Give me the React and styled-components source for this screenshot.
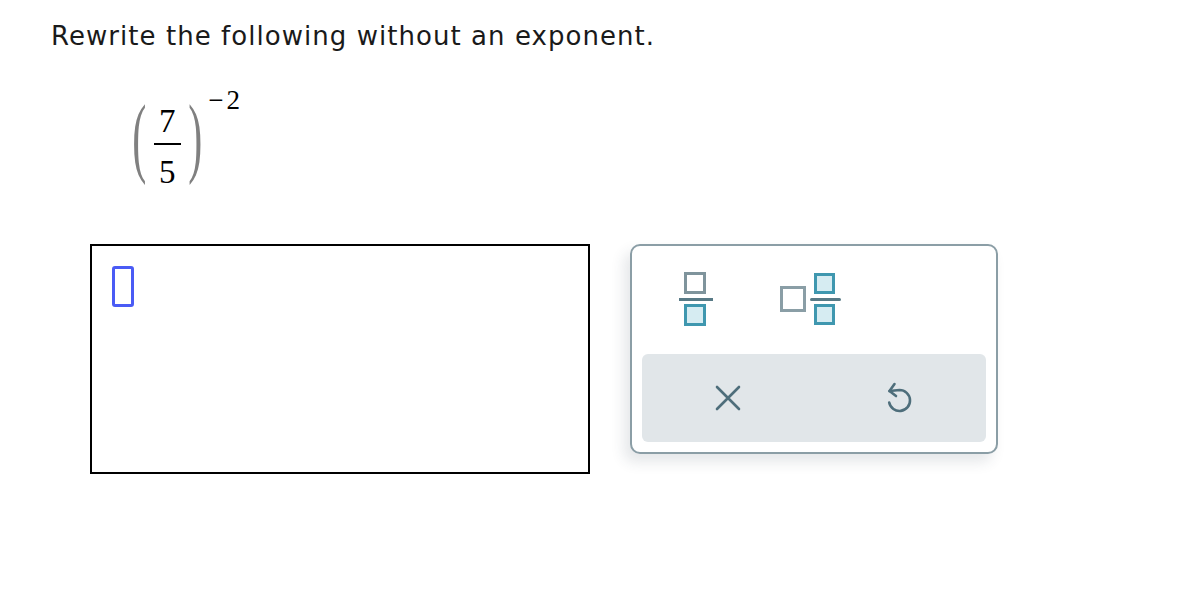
import styled, { createGlobalStyle } from "styled-components";

const GlobalStyle = createGlobalStyle`
  body {
    margin: 0;
    background: #ffffff;
    font-family: "DejaVu Sans", Verdana, sans-serif;
  }
`;

const Page = styled.div`
  width: 1182px;
  height: 590px;
  padding: 19px 0 0 51px;
  box-sizing: border-box;
`;

const Prompt = styled.div`
  font-size: 26px;
  letter-spacing: 1.05px;
  color: #1a1a1a;
  line-height: 34px;
`;

const MathBlock = styled.div`
  display: flex;
  align-items: flex-start;
  height: 110px;
  margin: 38px 0 0 78px;
  font-family: "Liberation Serif", "Times New Roman", serif;
  color: #000;
`;

const Paren = styled.span`
  display: inline-block;
  font-size: 62px;
  line-height: 62px;
  color: #808080;
  transform: scale(0.68, 1.42);
  transform-origin: center top;
  margin-top: 1px;
`;

const Fraction = styled.span`
  display: inline-flex;
  flex-direction: column;
  align-items: center;
  font-size: 33px;
  line-height: 33px;
  padding-top: 14px;
  margin: 0 4px;
`;

const Bar = styled.span`
  width: 27px;
  height: 1.5px;
  background: #000;
  margin: 5px 0 11px;
`;

const Exponent = styled.span`
  font-size: 27px;
  line-height: 27px;
  letter-spacing: 3px;
  margin: -4px 0 0 3px;
`;

const Row = styled.div`
  display: flex;
  align-items: flex-start;
  gap: 40px;
  margin: 43px 0 0 39px;
`;

const AnswerBox = styled.div`
  width: 500px;
  height: 230px;
  box-sizing: border-box;
  border: 2px solid #000;
  padding: 20px 0 0 20px;
`;

const Cursor = styled.div`
  width: 22px;
  height: 41px;
  box-sizing: border-box;
  border: 3px solid #4a5bf5;
  border-radius: 3px;
`;

const Keypad = styled.div`
  width: 368px;
  height: 210px;
  box-sizing: border-box;
  border: 2px solid #8b9ea6;
  border-radius: 10px;
  background: #fff;
  box-shadow: -6px 8px 14px rgba(40, 60, 70, 0.12);
  padding: 0 10px 10px;
  display: flex;
  flex-direction: column;
`;

const TopRow = styled.div`
  display: flex;
  height: 108px;
  margin-left: -4px;
`;

const KeyButton = styled.button`
  width: 115px;
  border: none;
  background: transparent;
  display: flex;
  align-items: center;
  justify-content: center;
  padding: 0;
  cursor: pointer;
`;

const ActionPanel = styled.div`
  flex: 1;
  background: #e1e6e9;
  border-radius: 6px;
  display: grid;
  grid-template-columns: 1fr 1fr;
`;

const ActionButton = styled.button`
  border: none;
  background: transparent;
  display: flex;
  align-items: center;
  justify-content: center;
  cursor: pointer;
`;

const FractionIcon = () => (
  <svg width="36" height="56" viewBox="0 0 36 56">
    <rect x="7.5" y="1.5" width="19" height="19" fill="#fff" stroke="#7f949c" strokeWidth="3" />
    <rect x="1" y="26" width="34" height="3" fill="#587a86" />
    <rect x="7.5" y="33.5" width="19" height="19" fill="#d6ecf2" stroke="#3f97af" strokeWidth="3" />
  </svg>
);

const MixedIcon = () => (
  <svg width="62" height="54" viewBox="0 0 62 54">
    <rect x="1.5" y="14.5" width="23" height="23" fill="#fff" stroke="#8a9ea6" strokeWidth="3" />
    <rect x="35.5" y="1.5" width="18" height="18" fill="#d6ecf2" stroke="#3f97af" strokeWidth="3" />
    <rect x="30" y="25" width="31" height="3" rx="1.5" fill="#587a86" />
    <rect x="35.5" y="32.5" width="18" height="18" fill="#d6ecf2" stroke="#3f97af" strokeWidth="3" />
  </svg>
);

const ClearIcon = () => (
  <svg width="28" height="28" viewBox="0 0 28 28">
    <path d="M3 3 L25 25 M25 3 L3 25" stroke="#4e6e7b" strokeWidth="2.6" strokeLinecap="round" />
  </svg>
);

const UndoIcon = () => (
  <svg width="30" height="36" viewBox="0 0 30 36">
    <path
      d="M4.2 22.5 A10.5 10.5 0 1 0 14.5 10 L4.5 11"
      fill="none"
      stroke="#4e6e7b"
      strokeWidth="2.6"
      strokeLinecap="round"
      strokeLinejoin="round"
    />
    <path
      d="M9.5 4 L4.5 11 L11 16"
      fill="none"
      stroke="#4e6e7b"
      strokeWidth="2.6"
      strokeLinecap="round"
      strokeLinejoin="round"
    />
  </svg>
);

export default function App() {
  return (
    <Page>
      <GlobalStyle />
      <Prompt>Rewrite the following without an exponent.</Prompt>
      <MathBlock>
        <Paren>(</Paren>
        <Fraction>
          <span>7</span>
          <Bar />
          <span>5</span>
        </Fraction>
        <Paren>)</Paren>
        <Exponent>−2</Exponent>
      </MathBlock>
      <Row>
        <AnswerBox>
          <Cursor />
        </AnswerBox>
        <Keypad>
          <TopRow>
            <KeyButton aria-label="fraction">
              <FractionIcon />
            </KeyButton>
            <KeyButton aria-label="mixed number">
              <MixedIcon />
            </KeyButton>
          </TopRow>
          <ActionPanel>
            <ActionButton aria-label="clear">
              <ClearIcon />
            </ActionButton>
            <ActionButton aria-label="undo">
              <UndoIcon />
            </ActionButton>
          </ActionPanel>
        </Keypad>
      </Row>
    </Page>
  );
}
